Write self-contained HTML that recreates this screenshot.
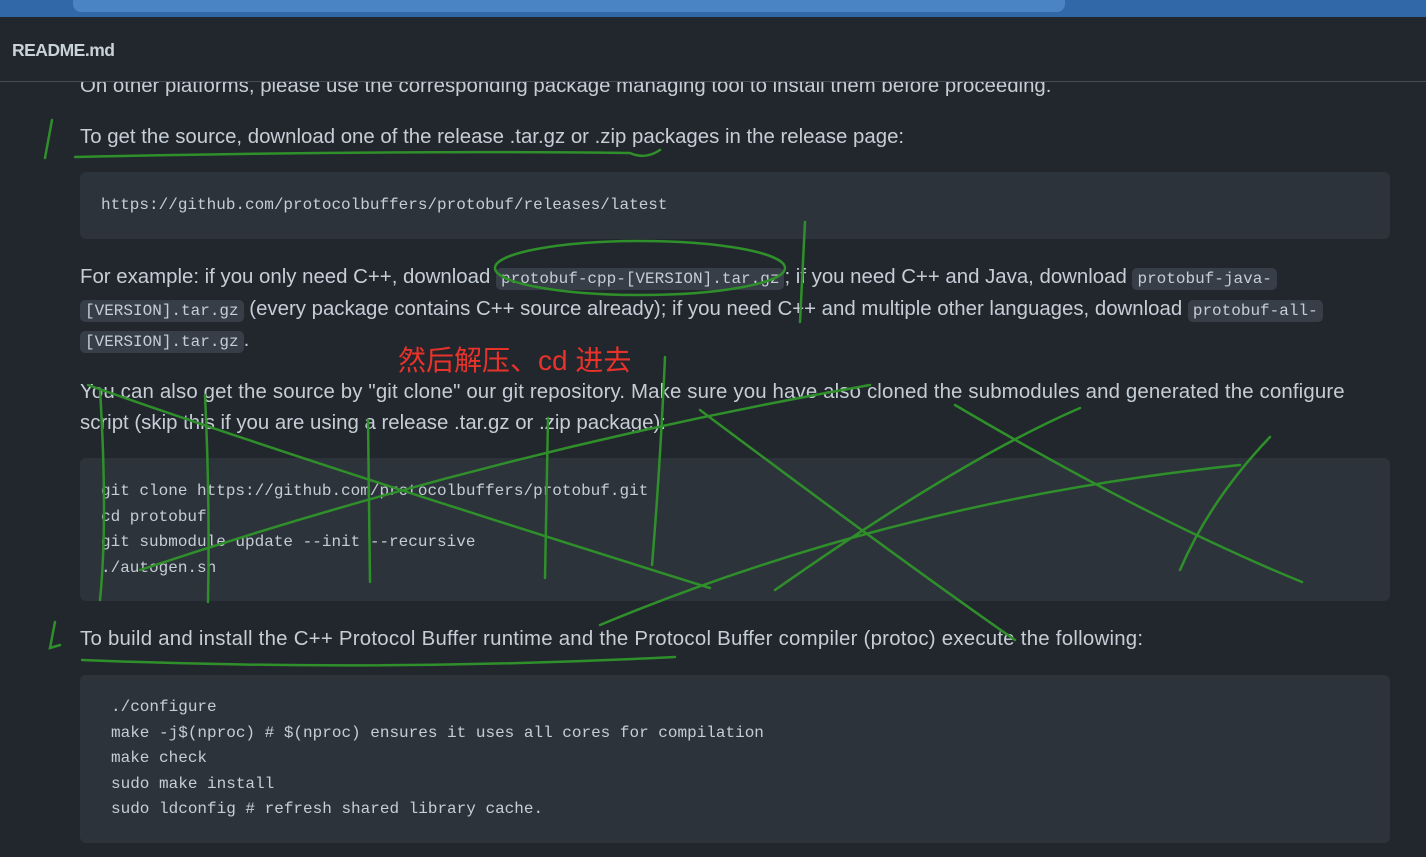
<!DOCTYPE html>
<html><head><meta charset="utf-8"><style>
body{margin:0;width:1426px;height:857px;overflow:hidden;background:#22272e;font-family:"Liberation Sans","Noto Sans CJK SC",sans-serif;color:#c5cdd6;position:relative}
.top{position:absolute;left:0;top:0;width:1426px;height:17px;background:#3169a8}
.addr{position:absolute;left:73px;top:0;width:992px;height:12px;background:#4a84c4;border-radius:0 0 8px 8px}
.hdr{position:absolute;left:0;top:17px;width:1426px;height:64px;border-bottom:1px solid #444c56;background:#22272e}
.hdr span{position:absolute;left:12px;top:23px;font-size:17.5px;color:#c9d1d9;font-weight:bold;letter-spacing:-0.5px}
.t{position:absolute;left:80px;font-size:20.4px;white-space:nowrap}
.cb{position:absolute;left:80px;width:1310px;background:#2d333b;border-radius:6px}
.m{position:absolute;font-family:"Liberation Mono",monospace;font-size:16px;color:#c5cdd6;white-space:pre;line-height:25.5px}
code{font-family:"Liberation Mono",monospace;font-size:16px;background:#373e47;border-radius:5px;padding:2px 5px}
</style></head><body>
<div class="top"><div class="addr"></div></div>
<div class="t" style="top:75px">On other platforms, please use the corresponding package managing tool to install them before proceeding.</div>
<div class="hdr"><span>README.md</span></div>
<div class="t" style="top:126px">To get the source, download one of the release .tar.gz or .zip packages in the release page:</div>
<div class="cb" style="top:172px;height:67px"><div class="m" style="left:21px;top:21px">https://github.com/protocolbuffers/protobuf/releases/latest</div></div>
<div class="t" style="top:266px">For example: if you only need C++, download <code>protobuf-cpp-[VERSION].tar.gz</code>; if you need C++ and Java, download <code>protobuf-java-</code></div>
<div class="t" style="top:298px"><code>[VERSION].tar.gz</code> (every package contains C++ source already); if you need C++ and multiple other languages, download <code>protobuf-all-</code></div>
<div class="t" style="top:329px"><code>[VERSION].tar.gz</code>.</div>
<div class="t" style="top:339px;left:398px;color:#e8332a;font-size:28px">然后解压、cd 进去</div>
<div class="t" style="top:381px;letter-spacing:0.15px">You can also get the source by "git clone" our git repository. Make sure you have also cloned the submodules and generated the configure</div>
<div class="t" style="top:412px">script (skip this if you are using a release .tar.gz or .zip package):</div>
<div class="cb" style="top:458px;height:143px"><div class="m" style="left:21px;top:21px">git clone https://github.com/protocolbuffers/protobuf.git
cd protobuf
git submodule update --init --recursive
./autogen.sh</div></div>
<div class="t" style="top:628px;letter-spacing:0.25px">To build and install the C++ Protocol Buffer runtime and the Protocol Buffer compiler (protoc) execute the following:</div>
<div class="cb" style="top:675px;height:168px"><div class="m" style="left:31px;top:20px">./configure
make -j$(nproc) # $(nproc) ensures it uses all cores for compilation
make check
sudo make install
sudo ldconfig # refresh shared library cache.</div></div>
<svg style="position:absolute;left:0;top:0" width="1426" height="857" fill="none" stroke="#2f8f2a" stroke-width="2.5" stroke-linecap="round">
<path d="M52 120 L45 158 M75 157 Q400 150 630 153 Q645 160 660 150"/>
<ellipse cx="640" cy="268" rx="145" ry="27"/>
<path d="M805 222 L800 322"/>
<path d="M100 390 Q108 520 100 600 M205 395 Q210 500 208 602 M368 420 L370 582 M548 418 L545 578 M665 357 Q660 470 652 565"/>
<path d="M88 385 Q300 460 710 588 M140 570 Q500 450 870 385 M700 410 Q900 560 1015 640 M775 590 Q960 460 1080 408 M955 405 Q1150 520 1302 582 M1180 570 Q1210 500 1270 437 M600 625 Q900 500 1240 465"/>
<path d="M55 622 L50 648 L60 645 M82 660 Q380 672 675 657"/>
</svg>
</body></html>
